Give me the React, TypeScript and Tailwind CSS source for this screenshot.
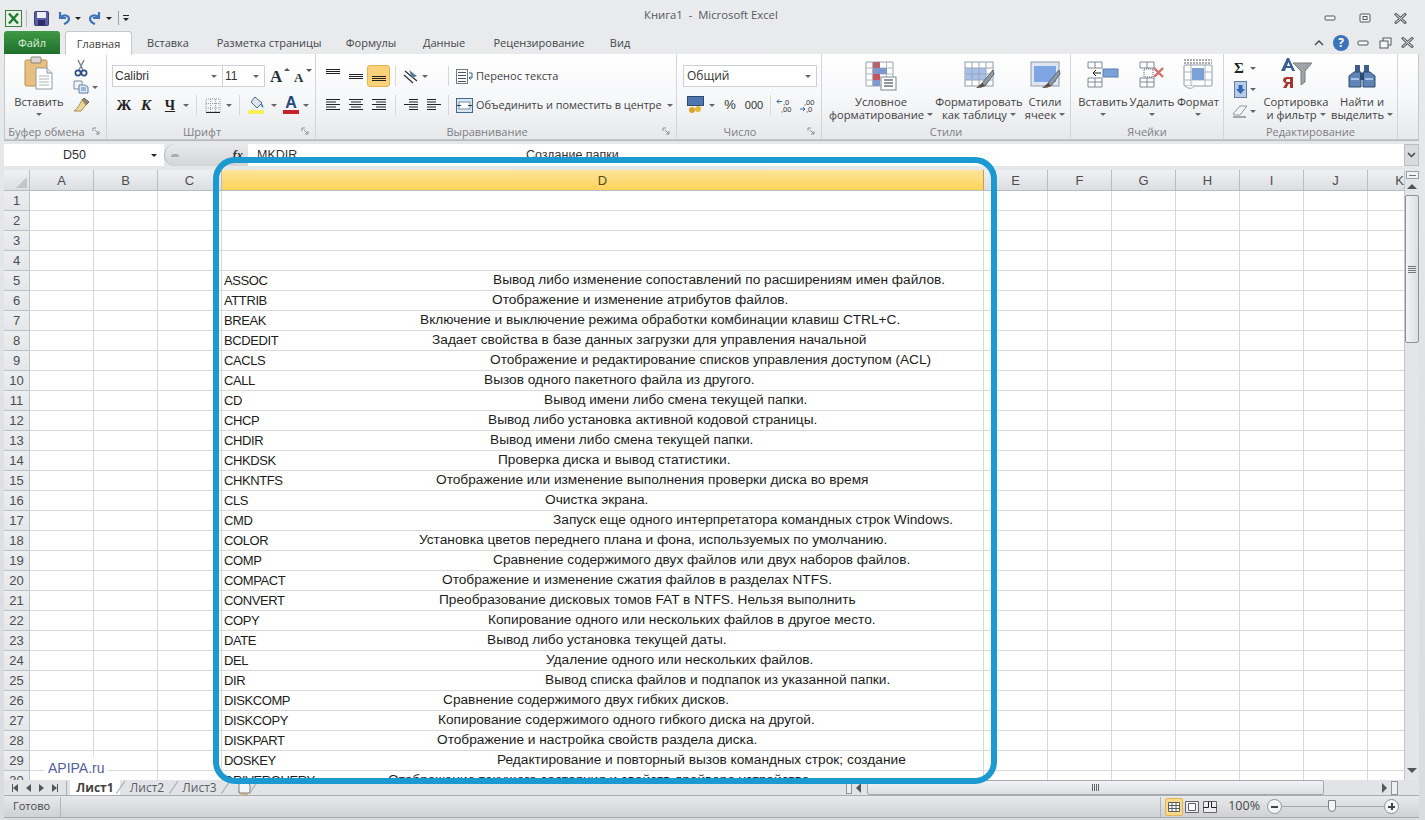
import type { ReactNode } from "react";

const rows: [string, string, number][] = [
  ["ASSOC", "Вывод либо изменение сопоставлений по расширениям имен файлов.", 493],
  ["ATTRIB", "Отображение и изменение атрибутов файлов.", 492],
  ["BREAK", "Включение и выключение режима обработки комбинации клавиш CTRL+C.", 420],
  ["BCDEDIT", "Задает свойства в базе данных загрузки для управления начальной", 432],
  ["CACLS", "Отображение и редактирование списков управления доступом (ACL)", 490],
  ["CALL", "Вызов одного пакетного файла из другого.", 484],
  ["CD", "Вывод имени либо смена текущей папки.", 544],
  ["CHCP", "Вывод либо установка активной кодовой страницы.", 488],
  ["CHDIR", "Вывод имени либо смена текущей папки.", 490],
  ["CHKDSK", "Проверка диска и вывод статистики.", 498],
  ["CHKNTFS", "Отображение или изменение выполнения проверки диска во время", 436],
  ["CLS", "Очистка экрана.", 545],
  ["CMD", "Запуск еще одного интерпретатора командных строк Windows.", 553],
  ["COLOR", "Установка цветов переднего плана и фона, используемых по умолчанию.", 419],
  ["COMP", "Сравнение содержимого двух файлов или двух наборов файлов.", 493],
  ["COMPACT", "Отображение и изменение сжатия файлов в разделах NTFS.", 442],
  ["CONVERT", "Преобразование дисковых томов FAT в NTFS. Нельзя выполнить", 439],
  ["COPY", "Копирование одного или нескольких файлов в другое место.", 488],
  ["DATE", "Вывод либо установка текущей даты.", 487],
  ["DEL", "Удаление одного или нескольких файлов.", 546],
  ["DIR", "Вывод списка файлов и подпапок из указанной папки.", 545],
  ["DISKCOMP", "Сравнение содержимого двух гибких дисков.", 443],
  ["DISKCOPY", "Копирование содержимого одного гибкого диска на другой.", 438],
  ["DISKPART", "Отображение и настройка свойств раздела диска.", 437],
  ["DOSKEY", "Редактирование и повторный вызов командных строк; создание", 497],
  ["DRIVERQUERY", "Отображение текущего состояния и свойств драйвера устройства.", 388],
];

const sideCols = ["E", "F", "G", "H", "I", "J"];

function Caret({ className = "" }: { className?: string }) {
  return <span className={`inline-block w-0 h-0 border-x-[3px] border-x-transparent border-t-[3px] border-t-[#666] ${className}`} />;
}

function Launcher() {
  return (
    <svg width="9" height="9" viewBox="0 0 9 9" className="shrink-0">
      <path d="M1 4V1h3M3 3l4 4M7 4v3H4" fill="none" stroke="#8b8f94" />
    </svg>
  );
}

function Sep() {
  return <div className="w-px h-5 bg-[#d6d8db] shrink-0" />;
}

function Group({ width, label, launcher, children }: { width: number; label: string; launcher?: boolean; children: ReactNode }) {
  return (
    <div className="shrink-0 flex flex-col h-full border-r border-[#d3d5d8]" style={{ width }}>
      <div className="flex-1 min-h-0">{children}</div>
      <div className={`h-[16px] pt-[1px] flex items-center justify-center relative text-[11px] text-[#7c7f84] leading-none ${launcher ? "pr-[18px]" : ""}`}>
        {label}
        {launcher && (
          <span className="absolute right-[5px] top-[4px]">
            <Launcher />
          </span>
        )}
      </div>
    </div>
  );
}

function AlignIcon({ lines }: { lines: [number, number][] }) {
  return (
    <svg width="16" height="14" viewBox="0 0 16 14">
      {lines.map(([a, b], i) => (
        <path key={i} d={`M${a} ${1.5 + i * 2.5}H${b}`} stroke="#222" strokeWidth="1" />
      ))}
    </svg>
  );
}

function VAlign({ y }: { y: number }) {
  return (
    <svg width="16" height="14" viewBox="0 0 16 14">
      <path d={`M1 ${y}.5H15M1 ${y + 2}.5H15M1 ${y + 4}.5H15`} stroke="#222" />
    </svg>
  );
}

function Clipboard() {
  return (
    <svg width="30" height="34" viewBox="0 0 30 34">
      <rect x="1" y="4" width="22" height="26" rx="1.5" fill="#e9bf81" stroke="#b98f52" />
      <rect x="7" y="1" width="10" height="6" rx="1" fill="#d9d6cf" stroke="#8a8676" />
      <path d="M12 12h11l5 5v16H12z" fill="#fff" stroke="#8f98a3" />
      <path d="M23 12v5h5" fill="#e3e7ec" stroke="#8f98a3" />
      <path d="M15 20h10M15 23h10M15 26h10M15 29h10" stroke="#aab2bc" />
    </svg>
  );
}

function Scissors() {
  return (
    <svg width="14" height="18" viewBox="0 0 14 18">
      <path d="M4 1l5 10M10 1L5 11" stroke="#7e8894" strokeWidth="1.5" />
      <circle cx="4" cy="14" r="2.6" fill="none" stroke="#2c4f85" strokeWidth="1.7" />
      <circle cx="10" cy="14" r="2.6" fill="none" stroke="#2c4f85" strokeWidth="1.7" />
    </svg>
  );
}

function CopyIcon() {
  return (
    <svg width="16" height="14" viewBox="0 0 16 14">
      <path d="M1 1h8v8H1z" fill="#f2f4f7" stroke="#7f8da0" />
      <path d="M6 5h6l3 2v6H6z" fill="#dcecfa" stroke="#5d7fa6" />
      <path d="M8 8h5M8 10h5" stroke="#5d7fa6" />
    </svg>
  );
}

function Brush() {
  return (
    <svg width="17" height="16" viewBox="0 0 17 16">
      <path d="M11 1l5 4-3 3-4-5z" fill="#8d8a78" stroke="#6a6655" />
      <path d="M9 3l4 5-5 6-7 0c3-2 5-5 8-11z" fill="#eed79a" stroke="#a98f52" />
    </svg>
  );
}

function FillBucket() {
  return (
    <svg width="18" height="18" viewBox="0 0 18 18">
      <path d="M7 1l7 6-5 5-6-6z" fill="#dde6f0" stroke="#53657c" />
      <path d="M13 7c2 2 3 3 2 5-2-1-2-3-2-5z" fill="#3f7fc4" />
      <rect x="0" y="14" width="16" height="4" fill="#f6f05a" />
    </svg>
  );
}

function WrapIcon() {
  return (
    <svg width="17" height="15" viewBox="0 0 17 15">
      <rect x=".5" y=".5" width="11" height="14" fill="#fff" stroke="#6c7a8a" />
      <path d="M2 3.500h8M2 6.500h8M2 9.500h8M2 12.500h8" stroke="#4a5663" />
      <path d="M13 4h3v5h-3M14.500 7.500L13 9l1.500 1.500" fill="none" stroke="#34618f" />
    </svg>
  );
}

function MergeIcon() {
  return (
    <svg width="17" height="15" viewBox="0 0 17 15">
      <rect x=".5" y=".5" width="16" height="14" fill="#d9e7f5" stroke="#44688f" />
      <rect x="3" y="4" width="11" height="7" fill="#fff" stroke="#7c8ea2" />
      <path d="M1 7.500h4M12 7.500h4" stroke="#1f3b60" />
    </svg>
  );
}

function CondFormat() {
  return (
    <svg width="32" height="30" viewBox="0 0 32 30">
      <path d="M1 1h27v24H1z" fill="#fff" stroke="#98a3b0" />
      <path d="M7.500 1v24M14.500 1v24M21.500 1v24M1 7h27M1 13h27M1 19h27" stroke="#aeb8c3" />
      <rect x="8" y="1" width="7" height="12" fill="#b6646a" />
      <rect x="8" y="7" width="14" height="6" fill="#7f96cf" />
      <rect x="8" y="13" width="7" height="6" fill="#c4575d" />
      <rect x="8" y="19" width="7" height="6" fill="#7f96cf" />
      <rect x="16" y="16" width="15" height="13" fill="#fff" stroke="#7a8590" />
      <path d="M19 19h9M19 22h9M19 25h9" stroke="#25303b" strokeWidth="1.2" />
    </svg>
  );
}

function TableBrush({ full }: { full?: boolean }) {
  return (
    <svg width="31" height="28" viewBox="0 0 31 28">
      <rect x="1" y="1" width="28" height="24" fill={full ? "#dfe6ef" : "#fff"} stroke="#8e9aa8" />
      {!full && <rect x="1" y="7" width="21" height="12" fill="#a8c0ea" />}
      {!full && <path d="M8 1v24M15 1v24M22 1v24M1 7h28M1 13h28M1 19h28" stroke="#9aa7b6" />}
      {full && <rect x="4" y="5" width="22" height="16" fill="#7ea5e4" />}
      <path d="M29 9L18 22l3 3L30 13z" fill="#8d99a6" stroke="#5c6772" />
      <path d="M18 22c-2 1-3 3-6 5 4 0 8-1 9-2z" fill="#5a5048" />
    </svg>
  );
}

function CellInsert() {
  return (
    <svg width="32" height="28" viewBox="0 0 32 28">
      <path d="M1 1h14v6H1zM1 17h14v9H1zM8 1v6M8 17v9M1 21h14" fill="#fff" stroke="#7c8895" />
      <rect x="16" y="8" width="15" height="8" fill="#7ba1d7" stroke="#5b80b5" />
      <path d="M14 12H6M9 9l-3 3 3 3" fill="none" stroke="#222" />
    </svg>
  );
}

function CellDelete() {
  return (
    <svg width="26" height="28" viewBox="0 0 26 28">
      <path d="M1 1h14v6H1zM1 17h14v9H1zM8 1v6M8 17v9M1 21h14" fill="#fff" stroke="#7c8895" />
      <path d="M5 8h9v8H5z" fill="#fff" stroke="#55606b" strokeDasharray="1 1" />
      <path d="M15 7l9 9M24 7l-9 9" stroke="#d96b6b" strokeWidth="2.4" />
    </svg>
  );
}

function CellFormat() {
  return (
    <svg width="30" height="31" viewBox="0 0 30 31">
      <path d="M1 1h28M1 4h28" stroke="#333" strokeDasharray="2 1" strokeWidth=".8" />
      <rect x="1" y="6" width="28" height="21" rx="1" fill="#fff" stroke="#8f9aa6" />
      <path d="M8 6v21M22 6v21M1 13h28M1 21h28" stroke="#a9b3bd" />
      <rect x="9" y="9" width="12" height="12" fill="#7ba1d7" />
      <path d="M2 27c3 3 8 3 9 0" fill="#fff" stroke="#8f9aa6" />
    </svg>
  );
}

function SortFilter() {
  return (
    <svg width="32" height="31" viewBox="0 0 32 31">
      <path d="M1 13L7 0h2l6 13h-3l-1-3H6l-1 3zM7 8h3L8.500 4z" fill="#3b5f93" fillRule="evenodd" />
      <path d="M3 30l3-5c-2 0-3-2-3-3 0-2 2-3 4-3h6v11h-3v-4H8.500l-2 4zM10 24v-3H7.500c-2 0-2 3 0 3z" fill="#a8342c" fillRule="evenodd" />
      <path d="M13 5h19l-7 8v11l-4 3V13z" fill="#9fa4a9" stroke="#7a7f84" />
    </svg>
  );
}

function Binoculars() {
  return (
    <svg width="28" height="26" viewBox="0 0 28 26">
      <path d="M7 2h5v8H7zM16 2h5v8h-5z" fill="#3c5d8d" />
      <path d="M1 24V13l5-4h7v15zM15 24V9h7l5 4v11z" fill="#5f84b6" stroke="#2d4a73" />
      <path d="M3 16h8M17 16h8" stroke="#a9c3e4" strokeWidth="2" />
      <rect x="12" y="10" width="4" height="7" fill="#2d4a73" />
    </svg>
  );
}

function FillDown() {
  return (
    <svg width="13" height="17" viewBox="0 0 13 17">
      <rect x=".5" y=".5" width="12" height="16" fill="#b7cdea" stroke="#5f7fa8" />
      <path d="M4.500 4h4v4h2.500l-4.500 5-4.500-5h2.500z" fill="#3269b1" />
    </svg>
  );
}

function Eraser() {
  return (
    <svg width="17" height="13" viewBox="0 0 17 13">
      <path d="M1 9l7-8h7l-7 9H3z" fill="#f4f5f6" stroke="#8d939a" />
      <path d="M1 12h13" stroke="#4f5a64" />
    </svg>
  );
}

function LargeBtn({ icon, lines, center, top, caretBelow }: { icon: ReactNode; lines: ReactNode[]; center: number; top: number; caretBelow?: boolean }) {
  return (
    <div className="flex flex-col items-center shrink-0" style={{ width: center }}>
      <div className="flex items-end justify-center h-[39px]" style={{ paddingBottom: top }}>
        {icon}
      </div>
      <div className="mt-[2px] text-[11.2px] leading-[13px] text-[#3f4143] text-center whitespace-nowrap">
        {lines.map((l, i) => (
          <div key={i}>{l}</div>
        ))}
        {caretBelow && (
          <div className="flex justify-center h-[13px] items-center">
            <Caret />
          </div>
        )}
      </div>
    </div>
  );
}

function Ribbon() {
  return (
    <div className="h-[86px] mx-[4px] mr-[6px] flex border border-t-0 border-[#c5c8cc] bg-gradient-to-b from-white via-[#f7f8f9] to-[#e7e8eb] shadow-[0_1px_0_#b5b8bc] font-['Open_Sans',sans-serif]">
      {/* Буфер обмена */}
      <Group width={102} label="Буфер обмена" launcher>
        <div className="flex h-full pl-[6px]">
          <LargeBtn center={56} top={3} caretBelow icon={<Clipboard />} lines={["Вставить"]} />
          <div className="flex flex-col items-center w-[26px] pt-[5px] gap-[3px] pl-[2px]">
            <Scissors />
            <div className="flex items-center gap-[3px] pl-[8px]">
              <CopyIcon />
              <Caret />
            </div>
            <Brush />
          </div>
        </div>
      </Group>

      {/* Шрифт */}
      <Group width={209} label="Шрифт" launcher>
        <div className="flex flex-col pl-[5px] pt-[11px]">
          <div className="flex items-center h-[22px]">
            <div className="w-[111px] h-[22px] border border-[#cdd0d4] bg-white flex items-center justify-between pl-[2px] pr-[5px] text-[12px] text-[#333] font-['Liberation_Sans',sans-serif]">
              Calibri <Caret />
            </div>
            <div className="w-[42px] h-[22px] border border-l-0 border-[#cdd0d4] bg-white flex items-center justify-between pl-[2px] pr-[5px] text-[12px] text-[#333] font-['Liberation_Sans',sans-serif]">
              11 <Caret />
            </div>
            <span className="ml-[5px] relative w-[20px] text-[17px] leading-none font-bold text-[#26303b] font-['Liberation_Serif',serif]">
              A<span className="absolute right-0 top-0 border-x-[3px] border-x-transparent border-b-[3px] border-b-[#555]" />
            </span>
            <span className="ml-[4px] relative w-[20px] text-[13px] leading-none font-bold text-[#26303b] font-['Liberation_Serif',serif] pt-[2px]">
              A<span className="absolute right-[2px] top-0 border-x-[3px] border-x-transparent border-t-[3px] border-t-[#555]" />
            </span>
          </div>
          <div className="flex items-center h-[22px] mt-[7px] text-[#222] font-['Liberation_Serif',serif] font-bold">
            <span className="w-[24px] text-center text-[15px]">Ж</span>
            <span className="w-[20px] text-center text-[15px] italic">К</span>
            <span className="w-[24px] ml-[2px] text-center text-[14px] underline">Ч</span>
            <Caret className="ml-[1px] mr-[7px]" />
            <Sep />
            <svg width="16" height="15" viewBox="0 0 16 15" className="ml-[8px]">
              <path d="M1 1h14v13H1zM5.500 1v13M10.500 1v13M1 5.500h14M1 10h14" fill="none" stroke="#98a0a8" strokeDasharray="1 1" />
              <path d="M1 14.500h14" stroke="#222" />
            </svg>
            <Caret className="ml-[5px] mr-[7px]" />
            <Sep />
            <span className="ml-[8px] flex items-center">
              <FillBucket />
            </span>
            <Caret className="ml-[5px]" />
            <span className="ml-[6px] flex flex-col items-center w-[16px] text-[16px] leading-[14px] text-[#23497e] font-['Liberation_Sans',sans-serif]">
              A<span className="w-[16px] h-[4px] bg-[#c5242c]" />
            </span>
            <Caret className="ml-[4px]" />
          </div>
        </div>
      </Group>

      {/* Выравнивание */}
      <Group width={361} label="Выравнивание" launcher>
        <div className="flex flex-col pl-[5px] pt-[11px] text-[11px] text-[#3f4143]">
          <div className="flex items-center h-[22px]">
            <span className="w-[23px] flex justify-center pb-[4px]"><VAlign y={2} /></span>
            <span className="w-[23px] flex justify-center"><VAlign y={5} /></span>
            <span className="w-[23px] h-[22px] flex items-center justify-center rounded-[3px] bg-[#fbd27a] border border-[#e3b354]"><VAlign y={7} /></span>
            <span className="mx-[5px]"><Sep /></span>
            <svg width="17" height="15" viewBox="0 0 17 15" className="ml-[2px]">
              <path d="M2 2l12 10M1 6l9 8" stroke="#333" strokeWidth="1.3" />
              <path d="M6 1l8 6-5 2z" fill="#5b7aa3" />
            </svg>
            <Caret className="ml-[2px] mr-[20px]" />
            <Sep />
            <span className="ml-[7px] mr-[3px] flex"><WrapIcon /></span>
            <span>Перенос текста</span>
          </div>
          <div className="flex items-center h-[22px] mt-[7px]">
            <span className="w-[23px] flex justify-center"><AlignIcon lines={[[1, 15], [1, 11], [1, 15], [1, 11], [1, 15]]} /></span>
            <span className="w-[23px] flex justify-center"><AlignIcon lines={[[1, 15], [3, 13], [1, 15], [3, 13], [1, 15]]} /></span>
            <span className="w-[23px] flex justify-center"><AlignIcon lines={[[1, 15], [5, 15], [1, 15], [5, 15], [1, 15]]} /></span>
            <span className="mx-[5px]"><Sep /></span>
            <span className="ml-[2px] w-[23px] flex"><AlignIcon lines={[[6, 15], [6, 15], [1, 15], [6, 15], [6, 15]]} /></span>
            <span className="w-[22px] flex"><AlignIcon lines={[[1, 10], [1, 10], [1, 15], [1, 10], [1, 10]]} /></span>
            <Sep />
            <span className="ml-[7px] mr-[3px] flex"><MergeIcon /></span>
            <span className="whitespace-nowrap text-[10.9px]">Объединить и поместить в центре</span>
            <Caret className="ml-[5px]" />
          </div>
        </div>
      </Group>

      {/* Число */}
      <Group width={145} label="Число" launcher>
        <div className="flex flex-col pl-[6px] pt-[11px]">
          <div className="w-[134px] h-[22px] border border-[#cdd0d4] bg-white flex items-center justify-between pl-[3px] pr-[5px] text-[12px] text-[#333]">
            Общий <Caret />
          </div>
          <div className="flex items-center h-[22px] mt-[7px] text-[12.5px] text-[#333] font-['Liberation_Sans',sans-serif]">
            <svg width="17" height="18" viewBox="0 0 17 18" className="ml-[4px]">
              <rect x=".5" y=".5" width="16" height="9" fill="#4e77ad" stroke="#2d4a73" />
              <circle cx="11" cy="13" r="3" fill="#e7b73c" />
              <circle cx="5" cy="14" r="3" fill="#d9a42c" />
            </svg>
            <Caret className="ml-[5px]" />
            <span className="ml-[7px] w-[16px] text-center text-[13px]">%</span>
            <span className="ml-[5px] w-[22px] text-center text-[11px]">000</span>
            <span className="mx-[5px]"><Sep /></span>
            <svg width="18" height="15" viewBox="0 0 18 15">
              <text x="7" y="6.5" fontSize="7.5" fill="#333">,0</text>
              <text x="5" y="14" fontSize="7.5" fill="#333">,00</text>
              <path d="M6 3.500H1M3 1.500l-2 2 2 2" fill="none" stroke="#3569a8" />
            </svg>
            <svg width="18" height="15" viewBox="0 0 18 15" className="ml-[5px]">
              <text x="5" y="6.5" fontSize="7.5" fill="#333">,00</text>
              <text x="7" y="14" fontSize="7.5" fill="#333">,0</text>
              <path d="M1 11h5M4 9l2 2-2 2" fill="none" stroke="#3569a8" />
            </svg>
          </div>
        </div>
      </Group>

      {/* Стили */}
      <Group width={249} label="Стили">
        <div className="flex pl-[7px]">
          <LargeBtn center={104} top={2} icon={<CondFormat />} lines={["Условное", <span key="a" className="inline-flex items-center gap-[3px]">форматирование <Caret /></span>]} />
          <LargeBtn center={92} top={4} icon={<TableBrush />} lines={["Форматировать", <span key="a" className="inline-flex items-center gap-[3px]">как таблицу <Caret /></span>]} />
          <LargeBtn center={40} top={4} icon={<TableBrush full />} lines={["Стили", <span key="a" className="inline-flex items-center gap-[3px]">ячеек <Caret /></span>]} />
        </div>
      </Group>

      {/* Ячейки */}
      <Group width={153} label="Ячейки">
        <div className="flex pl-[6px]">
          <LargeBtn center={52} top={4} caretBelow icon={<CellInsert />} lines={["Вставить"]} />
          <LargeBtn center={46} top={4} caretBelow icon={<CellDelete />} lines={["Удалить"]} />
          <LargeBtn center={46} top={3} caretBelow icon={<CellFormat />} lines={["Формат"]} />
        </div>
      </Group>

      {/* Редактирование */}
      <Group width={174} label="Редактирование">
        <div className="flex pl-[8px]">
          <div className="flex flex-col w-[28px] pt-[6px]">
            <div className="flex items-center h-[17px] gap-[6px] text-[15px] font-bold text-[#222] font-['Liberation_Serif',serif] pl-[2px]">
              Σ <Caret />
            </div>
            <div className="flex items-center h-[25px] gap-[3px] pl-[2px]">
              <FillDown /> <Caret />
            </div>
            <div className="flex items-center h-[19px] gap-[1px]">
              <Eraser /> <Caret />
            </div>
          </div>
          <LargeBtn center={72} top={4} icon={<SortFilter />} lines={["Сортировка", <span key="a" className="inline-flex items-center gap-[3px]">и фильтр <Caret /></span>]} />
          <LargeBtn center={60} top={4} icon={<Binoculars />} lines={["Найти и", <span key="a" className="inline-flex items-center gap-[3px]">выделить <Caret /></span>]} />
        </div>
      </Group>
    </div>
  );
}

function Corner({ kind }: { kind: "min" | "max" | "close" | "restore" }) {
  if (kind === "min")
    return (
      <svg width="12" height="8" viewBox="0 0 12 8">
        <rect x="1" y="2" width="10" height="4" rx="1" fill="#f4f5f6" stroke="#53585e" />
      </svg>
    );
  if (kind === "max")
    return (
      <svg width="12" height="10" viewBox="0 0 12 10">
        <rect x="1" y="1" width="10" height="8" rx="1" fill="#f4f5f6" stroke="#53585e" />
        <rect x="4" y="3.5" width="4" height="3" fill="none" stroke="#53585e" />
      </svg>
    );
  if (kind === "restore")
    return (
      <svg width="13" height="12" viewBox="0 0 13 12">
        <rect x="4" y="1" width="8" height="7" fill="#f4f5f6" stroke="#53585e" />
        <rect x="1" y="4" width="8" height="7" fill="#f4f5f6" stroke="#53585e" />
      </svg>
    );
  return (
    <svg width="13" height="11" viewBox="0 0 13 11">
      <path d="M2 1.500l9 8M11 1.500l-9 8" stroke="#53585e" strokeWidth="3" strokeLinecap="round" />
      <path d="M2 1.500l9 8M11 1.500l-9 8" stroke="#f4f5f6" strokeWidth="1" strokeLinecap="round" />
    </svg>
  );
}

function TitleBar() {
  return (
    <div className="h-[31px] flex items-center relative pt-[5px] font-['Open_Sans',sans-serif]">
      <div className="flex items-center pl-[5px] w-[140px]">
        <svg width="17" height="17" viewBox="0 0 17 17">
          <rect x=".5" y=".5" width="16" height="16" fill="#e8f2e6" stroke="#3e7c45" />
          <path d="M4 3.500l9 10M13 3.500l-9 10" stroke="#1f7a34" strokeWidth="2.4" />
        </svg>
        <div className="w-px h-[17px] bg-[#b9bcc0] ml-[4px]" />
        <svg width="15" height="15" viewBox="0 0 15 15" className="ml-[7px]">
          <rect x=".5" y=".5" width="14" height="14" rx="1" fill="#5a5da6" stroke="#3a3c7a" />
          <rect x="3" y="1" width="9" height="6" fill="#eef0f6" />
          <rect x="4" y="9" width="7" height="5" fill="#2c2e63" />
        </svg>
        <svg width="14" height="14" viewBox="0 0 14 14" className="ml-[8px]">
          <path d="M3 1v6h6M3 7c3-4 9-3 9 1 0 3-3 4-5 5" fill="none" stroke="#4076b9" strokeWidth="2.2" />
        </svg>
        <Caret className="ml-[4px] !border-t-[#222]" />
        <svg width="14" height="14" viewBox="0 0 14 14" className="ml-[7px]">
          <path d="M11 1v6H5M11 7C8 3 2 4 2 8c0 3 3 4 5 5" fill="none" stroke="#4076b9" strokeWidth="2.2" />
        </svg>
        <Caret className="ml-[4px] !border-t-[#222]" />
        <div className="w-px h-[14px] bg-[#9ea1a5] ml-[6px]" />
        <span className="ml-[4px] flex flex-col items-center gap-[2px]">
          <span className="w-[6px] h-px bg-[#222]" />
          <Caret className="!border-t-[#222]" />
        </span>
      </div>
      <div className="absolute left-[644px] top-[7px] text-[11.3px] leading-[16px] text-[#55585c] whitespace-pre">Книга1  -  Microsoft Excel</div>
      <div className="ml-auto flex items-center gap-[23px] pr-[18px]">
        <Corner kind="min" />
        <Corner kind="max" />
        <Corner kind="close" />
      </div>
    </div>
  );
}

function Tabs() {
  const tabs: [string, number][] = [
    ["Вставка", 72],
    ["Разметка страницы", 130],
    ["Формулы", 74],
    ["Данные", 72],
    ["Рецензирование", 118],
    ["Вид", 44],
  ];
  return (
    <div className="h-[23px] flex items-end pl-[4px] text-[11px] font-['Open_Sans',sans-serif]">
      <div className="w-[56px] h-[23px] pt-[1px] rounded-t-[3px] bg-gradient-to-b from-[#3f9a45] to-[#1f6f2c] text-[#dff0dc] flex items-center justify-center">Файл</div>
      <div className="ml-[5px] w-[67px] h-[24px] pt-[1px] -mb-px relative rounded-t-[3px] bg-white border border-b-0 border-[#c5c8cc] text-[#3f4143] flex items-center justify-center">Главная</div>
      {tabs.map(([name, w]) => (
        <div key={name} className="h-[23px] pt-[1px] flex items-center justify-center text-[#45484b]" style={{ width: w }}>
          {name}
        </div>
      ))}
      <div className="ml-auto flex items-center h-[23px] pr-[7px]">
        <span className="w-[22px] flex justify-center">
          <svg width="10" height="8" viewBox="0 0 10 8">
            <path d="M1 6l4-4 4 4" fill="none" stroke="#4a4d50" strokeWidth="1.5" />
          </svg>
        </span>
        <span className="w-[22px] flex justify-center">
          <span className="w-[16px] h-[16px] rounded-full bg-[#3c73b8] text-white text-[12px] font-bold flex items-center justify-center">?</span>
        </span>
        <span className="w-[22px] flex justify-center"><Corner kind="min" /></span>
        <span className="w-[22px] flex justify-center"><Corner kind="restore" /></span>
        <span className="w-[22px] flex justify-center"><Corner kind="close" /></span>
      </div>
    </div>
  );
}

function FormulaBar() {
  return (
    <div className="h-[22px] mt-[4px] ml-[4px] mr-[6px] flex text-[12.5px] text-[#333] font-['Liberation_Sans',sans-serif]">
      <div className="w-[160px] bg-white flex items-center justify-between pl-[59px] pr-[7px]">
        D50 <Caret className="!border-t-[#222]" />
      </div>
      <div className="w-[84px] rounded-l-[11px] border-l border-[#b9bcc0] bg-gradient-to-b from-[#e9eaec] to-[#d3d5d8] flex items-center justify-between pl-[6px] pr-[5px] font-['Liberation_Serif',serif] italic font-bold">
        <span className="w-[8px] h-[3px] rounded-t-full bg-[#a9acb0]" />
        fx
      </div>
      <div className="flex-1 bg-white flex items-center relative pl-[9px]">
        MKDIR
        <span className="absolute left-[278px]">Создание папки</span>
      </div>
      <div className="w-[15px] bg-[#d9dbde] border border-[#b9bcc0] flex items-center justify-center">
        <svg width="9" height="6" viewBox="0 0 9 6"><path d="M1 1l3.500 3.500L8 1" fill="none" stroke="#444" strokeWidth="1.5" /></svg>
      </div>
    </div>
  );
}

function Sheet() {
  const rowNums = Array.from({ length: 30 }, (_, i) => i + 1);
  return (
    <div className="h-[610px] mt-[4px] ml-[4px] mr-[6px] flex overflow-hidden bg-white font-['Liberation_Sans',sans-serif]">
      <div className="flex-1 min-w-0 overflow-hidden">
        {/* заголовки столбцов */}
        <div className="h-[20px] flex text-[13px] text-[#4b4e52] bg-gradient-to-b from-[#f0f1f3] to-[#dcdee1] border-b border-[#b9bcc0] box-content">
          <div className="w-[26px] shrink-0 border-r border-[#b9bcc0] relative">
            <span className="absolute right-[2px] bottom-[2px] w-0 h-0 border-l-[11px] border-l-transparent border-b-[11px] border-b-[#c3c5c8]" />
          </div>
          {["A", "B", "C"].map((c) => (
            <div key={c} className="w-[64px] shrink-0 border-r border-[#b9bcc0] flex items-center justify-center pt-[2px]">{c}</div>
          ))}
          <div className="w-[762px] shrink-0 bg-gradient-to-b from-[#fde59a] to-[#fdd255] border-r border-[#c9a04a] flex items-center justify-center pt-[2px] text-[#5b4a1e]">D</div>
          {sideCols.map((c) => (
            <div key={c} className="w-[64px] shrink-0 border-r border-[#b9bcc0] flex items-center justify-center pt-[2px]">{c}</div>
          ))}
          <div className="flex-1 flex items-center justify-end pt-[2px]">K</div>
        </div>
        {rowNums.map((n) => {
          const row = rows[n - 5];
          return (
            <div key={n} className="h-[20px] flex">
              <div className="w-[26px] shrink-0 bg-gradient-to-b from-[#eceef0] to-[#e4e6e9] border-r border-b border-[#bdc0c4] flex items-center justify-center text-[13px] text-[#4b4e52]">{n}</div>
              {[0, 1, 2].map((i) => (
                <div key={i} className="w-[64px] shrink-0 border-r border-b border-[#d8d8d8]" />
              ))}
              <div className="w-[762px] shrink-0 border-r border-b border-[#d8d8d8] relative flex items-center pl-[2px] text-[13px] tracking-[-0.4px] text-[#1c1c1c] whitespace-nowrap">
                {row && row[0]}
                {row && <span className="absolute text-[13.7px] tracking-normal" style={{ left: row[2] - 222 }}>{row[1]}</span>}
              </div>
              {sideCols.map((c) => (
                <div key={c} className="w-[64px] shrink-0 border-r border-b border-[#d8d8d8]" />
              ))}
              <div className="flex-1 border-b border-[#d8d8d8]" />
            </div>
          );
        })}
      </div>
      {/* вертикальная прокрутка */}
      <div className="w-[15px] shrink-0 bg-[#e3e5e8] border-l border-[#c3c5c8] flex flex-col items-center">
        <div className="w-[13px] h-[8px] mt-[1px] border border-[#9da1a5] bg-[#f1f2f3] flex items-center justify-center">
          <span className="w-[7px] h-px bg-[#777]" />
        </div>
        <div className="h-[14px] flex items-center"><span className="w-0 h-0 border-x-[5px] border-x-transparent border-b-[5px] border-b-[#555]" /></div>
        <div className="w-[14px] h-[148px] mt-[2px] rounded-[2px] border border-[#8f9296] bg-gradient-to-r from-[#f2f3f6] to-[#dcdee3] flex flex-col items-center justify-center gap-px">
          <span className="w-[8px] h-px bg-[#777]" />
          <span className="w-[8px] h-px bg-[#777]" />
          <span className="w-[8px] h-px bg-[#777]" />
          <span className="w-[8px] h-px bg-[#777]" />
        </div>
        <div className="mt-auto mb-[3px] h-[14px] flex items-center"><span className="w-0 h-0 border-x-[5px] border-x-transparent border-t-[5px] border-t-[#555]" /></div>
      </div>
    </div>
  );
}

function Slant() {
  return <span className="w-px h-[15px] bg-[#a9acb0] rotate-[35deg] shrink-0" />;
}

function SheetTabs() {
  return (
    <div className="h-[15px] ml-[4px] mr-[6px] flex items-center bg-[#e1e3e6] border-b border-[#a9acb0] text-[12px] font-['Open_Sans',sans-serif] box-content relative">
      <div className="w-[62px] flex items-center justify-around px-[4px] text-[#444]">
        <span className="flex items-center"><span className="w-px h-[8px] bg-[#555]" /><span className="w-0 h-0 border-y-[4px] border-y-transparent border-r-[5px] border-r-[#555]" /></span>
        <span className="w-0 h-0 border-y-[4px] border-y-transparent border-r-[5px] border-r-[#555]" />
        <span className="w-0 h-0 border-y-[4px] border-y-transparent border-l-[5px] border-l-[#555]" />
        <span className="flex items-center"><span className="w-0 h-0 border-y-[4px] border-y-transparent border-l-[5px] border-l-[#555]" /><span className="w-px h-[8px] bg-[#555]" /></span>
      </div>
      <span className="w-px h-[14px] bg-[#a9acb0] mr-[3px]" />
      <div className="w-[50px] h-[15px] bg-white text-center font-bold text-[#444] leading-[15px]">Лист1</div>
      <Slant />
      <div className="w-[52px] text-center text-[#5b5e62] leading-[15px]">Лист2</div>
      <Slant />
      <div className="w-[51px] text-center text-[#5b5e62] leading-[15px]">Лист3</div>
      <Slant />
      <svg width="16" height="14" viewBox="0 0 16 14" className="ml-[11px]">
        <path d="M2 1h8l3 3v8H2z" fill="#f4f5f6" stroke="#7a8088" />
        <path d="M1 10l3 3h7" fill="none" stroke="#c88f3a" />
      </svg>
      <Slant />
      <div className="ml-[592px] w-[6px] h-[13px] border border-[#8f9296] bg-[#eceef0]" />
      <span className="ml-[4px] w-0 h-0 border-y-[5px] border-y-transparent border-r-[5px] border-r-[#555]" />
      <div className="ml-[6px] w-[457px] h-[15px] border border-[#a5a8ac] rounded-[2px] bg-gradient-to-b from-[#f2f3f4] to-[#dcdee1] flex items-center justify-center">
        <span className="w-[8px] h-[7px] bg-[repeating-linear-gradient(90deg,#666_0,#666_1px,transparent_1px,transparent_2px)]" />
      </div>
      <span className="ml-[58px] w-0 h-0 border-y-[5px] border-y-transparent border-l-[5px] border-l-[#555]" />
      <div className="ml-[4px] w-[7px] h-[14px] border border-[#8f9296] bg-[#eceef0]" />
    </div>
  );
}

function StatusBar() {
  return (
    <div className="h-[22px] ml-[4px] mr-[6px] flex items-center bg-gradient-to-b from-[#e8e9eb] to-[#cfd1d4] border-b border-[#a9acb0] text-[11px] text-[#45484b] font-['Open_Sans',sans-serif]">
      <span className="ml-[9px]">Готово</span>
      <div className="ml-[10px] w-px h-[20px] bg-[#b0b3b7]" />
      <div className="ml-auto flex items-center">
        <div className="w-px h-[20px] bg-[#b0b3b7] mr-[4px]" />
        <div className="w-[18px] h-[18px] bg-[#fbd98a] border border-[#e3b354] rounded-[2px] flex items-center justify-center">
          <svg width="12" height="10" viewBox="0 0 12 10"><path d="M.5.5h11v9H.5zM.5 3.500h11M.5 6.500h11M4 .5v9M8 .5v9" fill="#fff" stroke="#5a5d60" /></svg>
        </div>
        <svg width="14" height="12" viewBox="0 0 14 12" className="ml-[2px]"><path d="M.5.5h13v11H.5z" fill="#eee" stroke="#63666a" /><path d="M3.500 2.500h7v7h-7z" fill="#fff" stroke="#63666a" /></svg>
        <svg width="14" height="12" viewBox="0 0 14 12" className="ml-[4px]"><path d="M.5.5h13v11H.5z" fill="#eee" stroke="#63666a" /><path d="M5.500.5v6h-5M8.500.5v6h5" fill="none" stroke="#222" /></svg>
        <span className="ml-[11px] text-[12.5px]">100%</span>
        <span className="ml-[7px] w-[15px] h-[15px] rounded-full border border-[#8f9296] bg-[#f4f5f6] flex items-center justify-center"><span className="w-[7px] h-[2px] bg-[#444]" /></span>
        <div className="w-[102px] h-px bg-[#a5a8ac] relative">
          <span className="absolute left-[46px] -top-[6px] w-[8px] h-[12px] rounded-b-[4px] border border-[#7d8084] bg-[#f4f5f6]" />
        </div>
        <span className="w-[15px] h-[15px] rounded-full border border-[#8f9296] bg-[#f4f5f6] flex items-center justify-center relative">
          <span className="w-[7px] h-[2px] bg-[#444]" />
          <span className="absolute w-[2px] h-[7px] bg-[#444]" />
        </span>
        <span className="w-[20px]" />
      </div>
    </div>
  );
}

export default function App() {
  return (
    <div className="w-[1425px] h-[820px] overflow-hidden relative bg-gradient-to-b from-[#e9ebed] via-[#dfe1e4] to-[#d9dbde]">
      <TitleBar />
      <Tabs />
      <Ribbon />
      <FormulaBar />
      <Sheet />
      <SheetTabs />
      <StatusBar />
      {/* рамка и подпись поверх окна */}
      <div className="absolute left-[213px] top-[157px] w-[784px] h-[627px] border-[6px] border-[#1a9ad0] rounded-[22px] pointer-events-none" />
      <div className="absolute left-[44px] top-[757px] w-[64px] h-[23px] bg-white text-[14px] leading-[23px] text-[#5560a0] pl-[4px] font-['Liberation_Sans',sans-serif]">APIPA.ru</div>
    </div>
  );
}
